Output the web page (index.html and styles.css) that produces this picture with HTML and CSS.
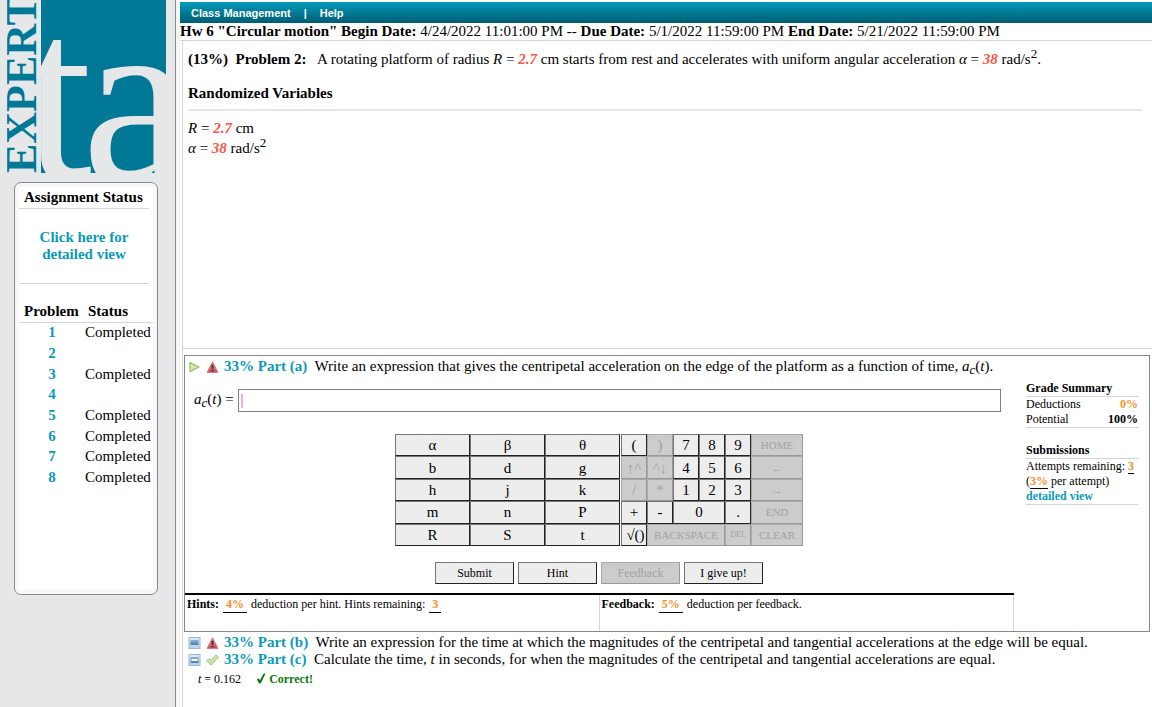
FILE: index.html
```html
<!DOCTYPE html>
<html lang="en">
<head>
<meta charset="utf-8">
<title>Expert TA - Circular motion</title>
<link rel="stylesheet" href="styles.css">
</head>
<body>
<svg class="defs" aria-hidden="true">
  <defs>
    <linearGradient id="red" x1="0" y1="0" x2="0" y2="1"><stop offset="0" stop-color="#eda0a5"/><stop offset="1" stop-color="#cf4650"/></linearGradient>
    <linearGradient id="blue" x1="0" y1="0" x2="0" y2="1"><stop offset="0" stop-color="#dfeaf3"/><stop offset="1" stop-color="#b7d0e4"/></linearGradient>
    <linearGradient id="deep" x1="0" y1="0" x2="0" y2="1"><stop offset="0" stop-color="#8db4d6"/><stop offset="1" stop-color="#3f7fb8"/></linearGradient>
    <symbol id="warn" viewBox="0 0 12 12">
      <path d="M6 .8 11.4 11.4H.6Z" fill="url(#red)" stroke="#d8747c" stroke-width="1" stroke-linejoin="round"/>
      <path d="M6 3.6V7.8" stroke="#3a3038" stroke-width="1.8"/>
      <path d="M6 8.8v1.6" stroke="#3a3038" stroke-width="1.8"/>
    </symbol>
    <symbol id="play" viewBox="0 0 12 12">
      <path d="M1.5 1.6 10.5 6 1.5 10.6Z" fill="#d6e8b0" stroke="#9dbb6c" stroke-width="1.2" stroke-linejoin="round"/>
    </symbol>
    <symbol id="box" viewBox="0 0 12 12">
      <rect x=".5" y=".5" width="11" height="11" fill="url(#blue)" stroke="#a3b6c6"/>
      <rect x="2" y="3" width="8" height="5" fill="url(#deep)"/>
    </symbol>
    <symbol id="boxminus" viewBox="0 0 12 12">
      <rect x=".5" y=".5" width="11" height="11" fill="url(#blue)" stroke="#a3b6c6"/>
      <rect x="2" y="3" width="8" height="6" fill="url(#deep)"/>
      <rect x="3" y="5" width="6" height="2" fill="#fff"/>
    </symbol>
    <symbol id="tick" viewBox="0 0 14 12">
      <path d="M.6 7 3.2 4.4 5.4 6.4 10.8.6 13.4 3 5.6 11.4Z" fill="#cfe3a2" stroke="#a3b98a" stroke-width="1" stroke-linejoin="round"/>
    </symbol>
  </defs>
</svg>
<div class="page">
  <aside class="sidebar">
    <svg class="logo" width="159" height="173" viewBox="7 0 159 173" role="img" aria-label="Expert TA">
      <rect x="41" y="0" width="125" height="173" fill="#007896"/>
      <text class="logo-big" x="24" y="179">t</text>
      <text class="logo-big" x="82" y="182">a</text>
      <text class="logo-side" transform="translate(36 173) rotate(-90)">EXPERT</text>
    </svg>
    <section class="status">
      <div class="status-body">
        <h2 class="status-title">Assignment Status</h2>
        <p class="status-link"><a href="#">Click here for<br>detailed view</a></p>
        <table class="problems">
          <thead><tr><th>Problem</th><th>Status</th></tr></thead>
          <tbody>
            <tr><td><a href="#">1</a></td><td>Completed</td></tr>
            <tr><td><a href="#">2</a></td><td></td></tr>
            <tr><td><a href="#">3</a></td><td>Completed</td></tr>
            <tr><td><a href="#">4</a></td><td></td></tr>
            <tr><td><a href="#">5</a></td><td>Completed</td></tr>
            <tr><td><a href="#">6</a></td><td>Completed</td></tr>
            <tr><td><a href="#">7</a></td><td>Completed</td></tr>
            <tr><td><a href="#">8</a></td><td>Completed</td></tr>
          </tbody>
        </table>
      </div>
    </section>
  </aside>
  <main class="main">
    <nav class="menu"><a href="#">Class Management</a><span>|</span><a href="#">Help</a></nav>
    <header class="dates"><b>Hw 6 "Circular motion" Begin Date:</b> 4/24/2022 11:01:00 PM -- <b>Due Date:</b> 5/1/2022 11:59:00 PM <b>End Date:</b> 5/21/2022 11:59:00 PM</header>
    <div class="content">
      <section class="problem">
        <p class="line"><b>(13%)&nbsp; Problem 2:</b>&nbsp;&nbsp; A rotating platform of radius <i>R</i> = <em>2.7</em> cm starts from rest and accelerates with uniform angular acceleration <i>α</i> = <em>38</em> rad/s<sup>2</sup>.</p>
        <h3 class="variables">Randomized Variables</h3>
        <p class="value"><i>R</i> = <em>2.7</em> cm</p>
        <p class="value"><i>α</i> = <em>38</em> rad/s<sup>2</sup></p>
      </section>
      <section class="panel">
        <div class="part"><svg class="icon"><use href="#play"/></svg><svg class="icon"><use href="#warn"/></svg><p><b class="teal">33% Part (a)</b>&nbsp; Write an expression that gives the centripetal acceleration on the edge of the platform as a function of time, <i>a<sub>c</sub></i>(<i>t</i>).</p></div>
        <div class="work">
          <div class="entry">
            <div class="answer"><label for="expr"><i>a<sub>c</sub></i>(<i>t</i>) =</label><div class="field"><input id="expr" type="text"><span class="caret"></span></div></div>
            <div class="keypad">
              <div class="letters">
                <button>α</button><button>β</button><button>θ</button>
                <button>b</button><button>d</button><button>g</button>
                <button>h</button><button>j</button><button>k</button>
                <button>m</button><button>n</button><button>P</button>
                <button>R</button><button>S</button><button>t</button>
              </div>
              <div class="numbers">
                <button>(</button><button disabled>)</button><button>7</button><button>8</button><button>9</button><button class="small" disabled>HOME</button>
                <button disabled>↑^</button><button disabled>^↓</button><button>4</button><button>5</button><button>6</button><button class="small" disabled>←</button>
                <button disabled>/</button><button disabled>*</button><button>1</button><button>2</button><button>3</button><button class="small" disabled>→</button>
                <button>+</button><button>-</button><button class="wide">0</button><button>.</button><button class="small" disabled>END</button>
                <button class="root">√()</button><button class="small back" disabled>BACKSPACE</button><button class="tiny" disabled>DEL</button><button class="small" disabled>CLEAR</button>
              </div>
            </div>
            <div class="actions"><button>Submit</button><button>Hint</button><button disabled>Feedback</button><button>I give up!</button></div>
            <div class="notes">
              <p><b>Hints:</b> <b class="blank">4%</b> deduction per hint. Hints remaining: <b class="blank">3</b></p>
              <p><b>Feedback:</b> <b class="blank">5%</b> deduction per feedback.</p>
            </div>
          </div>
          <aside class="summary">
            <h4>Grade Summary</h4>
            <table class="grades">
              <tr><td>Deductions</td><td class="orange">0%</td></tr>
              <tr><td>Potential</td><td>100%</td></tr>
            </table>
            <h4>Submissions</h4>
            <div class="submissions">
              <p>Attempts remaining: <b class="under">3</b></p>
              <p>(<b class="under">3%</b> per attempt)</p>
              <a href="#">detailed view</a>
            </div>
          </aside>
        </div>
      </section>
      <section class="others">
        <div class="part"><svg class="icon"><use href="#box"/></svg><svg class="icon"><use href="#warn"/></svg><p><b class="teal">33% Part (b)</b>&nbsp; Write an expression for the time at which the magnitudes of the centripetal and tangential accelerations at the edge will be equal.</p></div>
        <div class="part"><svg class="icon"><use href="#boxminus"/></svg><svg class="icon"><use href="#tick"/></svg><p><b class="teal">33% Part (c)</b>&nbsp; Calculate the time, <i>t</i> in seconds, for when the magnitudes of the centripetal and tangential accelerations are equal.</p></div>
        <div class="result"><span><i>t</i> = 0.162</span><span class="correct"><svg class="check" viewBox="0 0 10 12"><path d="M.5 7 2.5 5.8 3.8 8 8 .5H10L4.6 11.5H3Z" fill="#0b7a0b"/></svg> Correct!</span></div>
      </section>
    </div>
  </main>
</div>
</body>
</html>
```
FILE: styles.css
```css
* { box-sizing: border-box; }
body, p, h2, h3, h4 { margin: 0; }
body {
  background: #fff;
  color: #000;
  font-family: "Liberation Serif", "Times New Roman", serif;
  font-size: 15px;
  line-height: 17px;
}
a { color: #0a9aba; font-weight: bold; text-decoration: none; }
em { color: #fa5347; font-weight: bold; }
sup, sub { font-size: 13px; line-height: 0; }
sub { vertical-align: -3px; }
h2, h3, h4 { font-size: inherit; }
.defs { position: absolute; width: 0; height: 0; }

.page { display: flex; min-height: 100vh; }
.sidebar {
  flex: none;
  width: 176px;
  background: #e5e7e9;
  border-right: 1px solid #8a8a8a;
}
.logo { display: block; margin: 0 0 9px 7px; }
.logo-big { font-size: 245px; fill: #e5e7e9; }
.logo-side { font-size: 44px; font-weight: bold; fill: #007896; }

.status {
  margin: 0 17px 0 14px;
  padding: 4px;
  background: #f8f8f8;
  border: 1px solid #8a8a8a;
  border-radius: 7px;
}
.status-body { background: #fff; min-height: 403px; }
.status-title {
  margin-right: 4px;
  padding: 2px 0 2px 5px;
  border-bottom: 1px solid #d4d4d4;
}
.status-link {
  margin-right: 4px;
  padding: 20px 0;
  text-align: center;
  border-bottom: 1px solid #d4d4d4;
}
.problems {
  width: 100%;
  height: 186px;
  margin-top: 18px;
  border-collapse: collapse;
}
.problems th, .problems td { padding: 0; text-align: left; }
.problems th { border-bottom: 1px solid #d4d4d4; height: 20px; }
.problems th:first-child { padding-left: 5px; width: 66px; }
.problems th:last-child { padding-left: 3px; }
.problems td:first-child { text-align: center; }

.main {
  flex: 1;
  min-width: 0;
  padding-top: 2px;
  border-left: 4px solid #f6f6f6;
}
.menu {
  display: flex;
  gap: 13px;
  align-items: center;
  height: 21px;
  padding-left: 11px;
  background: linear-gradient(#039abb, #005c72);
  color: #fff;
  font: bold 11px "Liberation Sans", Arial, sans-serif;
}
.menu a { color: #fff; }
.dates { height: 18px; border-bottom: 1px solid #d4d4d4; }
.content { margin-left: 2px; border-left: 1px solid #d4d4d4; min-height: 666px; }
.problem {
  min-height: 308px;
  padding: 10px 10px 0 5px;
  border-bottom: 1px solid #d4d4d4;
}
.variables {
  margin: 17px 0 7px;
  padding-bottom: 7px;
  border-bottom: 2px solid #e6e6e6;
}
.value { line-height: 20px; }

.panel { margin: 6px 2px 0 1px; border: 1px solid #888; }
.part { display: flex; align-items: center; padding-left: 4px; }
.icon { flex: none; width: 13px; height: 12px; margin-right: 5px; }
.teal { color: #0a9aba; }
.panel .part { padding: 2px 0 0 3px; }
.work { display: flex; }
.entry { flex: 1; min-width: 0; }
.answer {
  display: flex;
  align-items: center;
  gap: 4px;
  margin: 14px 13px 0 9px;
}
.answer label { padding-bottom: 2px; }
.field { position: relative; flex: 1; }
.field input {
  display: block;
  width: 100%;
  height: 23px;
  border: 1px solid #808080;
  background: #fff;
  font: inherit;
}
.caret {
  position: absolute;
  left: 3px;
  top: 5px;
  width: 2px;
  height: 14px;
  background: #ffaad4;
}
button {
  padding: 0;
  border: 1px solid;
  border-color: #767676 #222 #222 #767676;
  background: #ededed;
  color: #000;
  font: inherit;
}
button:disabled {
  background: #ccc;
  color: #a2a2a2;
  border-color: #aaa #999 #999 #aaa;
}
.keypad { display: flex; justify-content: center; gap: 1px; margin: 22px 1px 0 0; }
.letters, .numbers { display: grid; grid-template-rows: repeat(5, 1fr); height: 112px; }
.letters button, .numbers button { min-height: 0; line-height: 16px; }
.letters { grid-template-columns: repeat(3, 75px); }
.numbers { grid-template-columns: repeat(5, 26px) 52px; }
.numbers .small { font-size: 11px; }
.numbers .tiny { font-size: 8px; }
.numbers .root { padding-left: 3px; white-space: nowrap; }
.wide { grid-column: span 2; }
.back { grid-column: span 3; }
.actions { display: flex; justify-content: center; gap: 4px; margin: 16px 1px 9px 0; }
.actions button { width: 79px; height: 22px; font-size: 12px; }
.notes {
  display: grid;
  grid-template-columns: 1fr 1fr;
  border-top: 2px solid #000;
  font-size: 12px;
}
.notes p { height: 36px; padding: 1px 2px; border-right: 1px solid #d4d4d4; }
.blank {
  display: inline-block;
  margin: 0 1px;
  padding: 0 3px;
  line-height: 15px;
  color: #f7912d;
  border-bottom: 1px solid #000;
}
.summary { flex: none; width: 135px; padding: 6px 11px 0 12px; font-size: 12px; line-height: 15px; }
.summary h4 { border-bottom: 1px solid #d4d4d4; }
.grades { width: 100%; margin-bottom: 15px; border-collapse: collapse; border-bottom: 1px solid #d4d4d4; }
.grades td { padding: 0; }
.grades td:last-child { text-align: right; font-weight: bold; }
.grades .orange { color: #f7912d; }
.submissions { border-bottom: 1px solid #d4d4d4; }
.under { display: inline-block; line-height: 14px; color: #f7912d; border-bottom: 1px solid #000; }

.others { padding: 2px 0 0 1px; }
.result { display: flex; gap: 15px; padding: 3px 0 0 14px; font-size: 12px; }
.correct { color: #0b7a0b; font-weight: bold; }
.check { width: 10px; height: 11px; vertical-align: -1px; }
```
